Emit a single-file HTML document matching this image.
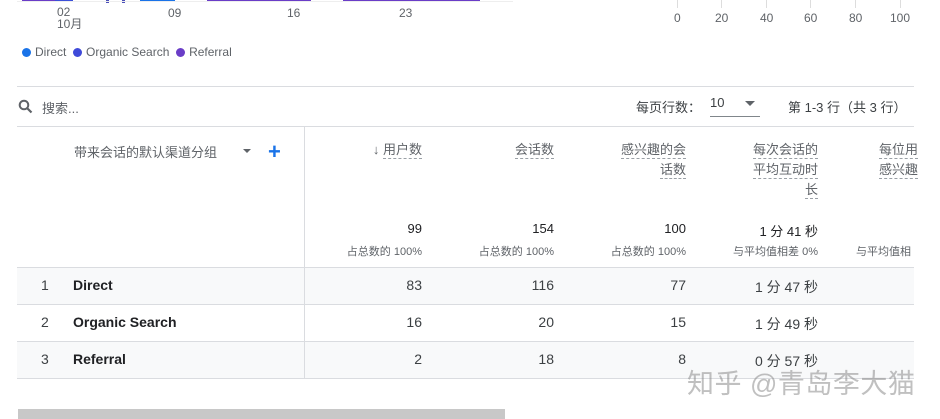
<!DOCTYPE html>
<html><head><meta charset="utf-8"><style>
*{margin:0;padding:0;box-sizing:border-box}
body{width:940px;height:419px;overflow:hidden;background:#fff;font-family:"Liberation Sans","Noto Sans CJK SC",sans-serif;color:#3c4043;position:relative}
.a{position:absolute;white-space:nowrap}
.g{color:#5f6368}
.hl{position:absolute;height:1px;background:#dadce0}
.r{text-align:right}
.u{border-bottom:1px dashed #9aa0a6;padding-bottom:1px}
.dot{display:inline-block;width:9px;height:9px;border-radius:50%;vertical-align:-1px;margin-right:4px}
</style></head><body>
<div class="a" style="left:22px;top:0;width:51px;height:2px;background:#6a3dc7"></div>
<div class="a" style="left:55px;top:0;width:18px;height:2px;background:#3b4fd8"></div>
<div class="a" style="left:106px;top:0;width:3px;height:3px;background:#4b4fb8"></div>
<div class="a" style="left:122px;top:0;width:3px;height:3px;background:#4b4fb8"></div>
<div class="a" style="left:140px;top:0;width:35px;height:2px;background:#1a73e8"></div>
<div class="a" style="left:207px;top:0;width:104px;height:2px;background:#6a3dc7"></div>
<div class="a" style="left:343px;top:0;width:137px;height:2px;background:#6a3dc7"></div>
<div class="hl" style="left:17px;top:1px;width:496px;background:#eee"></div>
<div class="a g" style="left:57px;top:6px;font-size:12px;line-height:12px">02<br>10月</div>
<div class="a g" style="left:168px;top:6px;font-size:12px">09</div>
<div class="a g" style="left:287px;top:6px;font-size:12px">16</div>
<div class="a g" style="left:399px;top:6px;font-size:12px">23</div>
<div class="a g" style="left:674px;top:11px;font-size:12px">0</div>
<div class="a g" style="left:715px;top:11px;font-size:12px">20</div>
<div class="a g" style="left:760px;top:11px;font-size:12px">40</div>
<div class="a g" style="left:804px;top:11px;font-size:12px">60</div>
<div class="a g" style="left:849px;top:11px;font-size:12px">80</div>
<div class="a g" style="left:890px;top:11px;font-size:12px">100</div>
<div class="a" style="left:677px;top:0;width:1px;height:8px;background:#ddd"></div>
<div class="a" style="left:721px;top:0;width:1px;height:8px;background:#ddd"></div>
<div class="a" style="left:766px;top:0;width:1px;height:8px;background:#ddd"></div>
<div class="a" style="left:810px;top:0;width:1px;height:8px;background:#ddd"></div>
<div class="a" style="left:855px;top:0;width:1px;height:8px;background:#ddd"></div>
<div class="a" style="left:900px;top:0;width:1px;height:8px;background:#ddd"></div>
<div class="a g" style="left:22px;top:45px;font-size:12px"><span class="dot" style="background:#1a73e8"></span>Direct&nbsp; <span class="dot" style="background:#3f4ad9"></span>Organic Search&nbsp; <span class="dot" style="background:#6a3dc7"></span>Referral</div>
<div class="hl" style="left:17px;top:86px;width:897px"></div>
<svg class="a" style="left:18px;top:99px" width="15" height="15" viewBox="0 0 15 15"><circle cx="6" cy="6" r="4.3" fill="none" stroke="#5f6368" stroke-width="2"/><path d="M9 9l4.5 4.5" stroke="#5f6368" stroke-width="2.2"/></svg>
<div class="a g" style="left:42px;top:98px;font-size:13px">搜索...</div>
<div class="a" style="left:636px;top:97px;font-size:13px;color:#3c4043">每页行数：</div>
<div class="a" style="left:710px;top:95px;font-size:13px">10</div>
<div class="a" style="left:745px;top:101px;width:0;height:0;border-left:5px solid transparent;border-right:5px solid transparent;border-top:5px solid #5f6368"></div>
<div class="a" style="left:710px;top:116px;width:50px;height:1px;background:#80868b"></div>
<div class="a" style="left:788px;top:97px;font-size:13px">第 1-3 行（共 3 行）</div>
<div class="hl" style="left:17px;top:126px;width:897px"></div>
<div class="a" style="left:304px;top:126px;width:1px;height:252px;background:#dadce0"></div>
<div class="a g" style="left:74px;top:142px;font-size:13px">带来会话的默认渠道分组</div>
<div class="a" style="left:243px;top:149px;border-left:4px solid transparent;border-right:4px solid transparent;border-top:4px solid #5f6368"></div>
<div class="a" style="left:268px;top:139px;font-size:22px;color:#1a73e8;font-weight:bold">+</div>
<div class="a g r" style="right:518px;top:140px;font-size:13px;line-height:20px">↓ <span class="u">用户数</span></div>
<div class="a g r" style="right:386px;top:140px;font-size:13px;line-height:20px"><span class="u">会话数</span></div>
<div class="a g r" style="right:254px;top:140px;font-size:13px;line-height:20px"><span class="u">感兴趣的会</span><br><span class="u">话数</span></div>
<div class="a g r" style="right:122px;top:140px;font-size:13px;line-height:20px"><span class="u">每次会话的</span><br><span class="u">平均互动时</span><br><span class="u">长</span></div>
<div class="a g" style="left:879px;top:140px;font-size:13px;line-height:20px"><span class="u">每位用</span><br><span class="u">感兴趣</span></div>
<div class="a r" style="right:518px;top:221px;font-size:13px;color:#202124">99</div>
<div class="a r" style="right:386px;top:221px;font-size:13px;color:#202124">154</div>
<div class="a r" style="right:254px;top:221px;font-size:13px;color:#202124">100</div>
<div class="a r" style="right:122px;top:221px;font-size:13px;color:#202124">1 分 41 秒</div>
<div class="a g r" style="right:518px;top:243px;font-size:11px">占总数的 100%</div>
<div class="a g r" style="right:386px;top:243px;font-size:11px">占总数的 100%</div>
<div class="a g r" style="right:254px;top:243px;font-size:11px">占总数的 100%</div>
<div class="a g r" style="right:122px;top:243px;font-size:11px">与平均值相差 0%</div>
<div class="a g" style="left:856px;top:243px;font-size:11px">与平均值相</div>
<div class="a" style="left:17px;top:267px;width:897px;height:37px;background:#f8f9fa"></div>
<div class="a" style="left:17px;top:341px;width:897px;height:37px;background:#f8f9fa"></div>
<div class="hl" style="left:17px;top:267px;width:897px"></div>
<div class="hl" style="left:17px;top:304px;width:897px"></div>
<div class="hl" style="left:17px;top:341px;width:897px"></div>
<div class="hl" style="left:17px;top:378px;width:897px"></div>
<div class="a" style="left:304px;top:267px;width:1px;height:111px;background:#dadce0"></div>
<div class="a" style="left:41px;top:277px;font-size:14px">1</div>
<div class="a" style="left:73px;top:277px;font-size:14px;color:#202124;font-weight:bold">Direct</div>
<div class="a r" style="right:518px;top:277px;font-size:14px">83</div>
<div class="a r" style="right:386px;top:277px;font-size:14px">116</div>
<div class="a r" style="right:254px;top:277px;font-size:14px">77</div>
<div class="a r" style="right:122px;top:277px;font-size:14px">1 分 47 秒</div>
<div class="a" style="left:41px;top:314px;font-size:14px">2</div>
<div class="a" style="left:73px;top:314px;font-size:14px;color:#202124;font-weight:bold">Organic Search</div>
<div class="a r" style="right:518px;top:314px;font-size:14px">16</div>
<div class="a r" style="right:386px;top:314px;font-size:14px">20</div>
<div class="a r" style="right:254px;top:314px;font-size:14px">15</div>
<div class="a r" style="right:122px;top:314px;font-size:14px">1 分 49 秒</div>
<div class="a" style="left:41px;top:351px;font-size:14px">3</div>
<div class="a" style="left:73px;top:351px;font-size:14px;color:#202124;font-weight:bold">Referral</div>
<div class="a r" style="right:518px;top:351px;font-size:14px">2</div>
<div class="a r" style="right:386px;top:351px;font-size:14px">18</div>
<div class="a r" style="right:254px;top:351px;font-size:14px">8</div>
<div class="a r" style="right:122px;top:351px;font-size:14px">0 分 57 秒</div>
<div class="a" style="left:687px;top:362px;font-size:27px;letter-spacing:0.5px;color:rgba(130,130,130,0.5)">知乎 @青岛李大猫</div>
<div class="a" style="left:18px;top:409px;width:487px;height:10px;background:#c8c8c8"></div>
</body></html>
